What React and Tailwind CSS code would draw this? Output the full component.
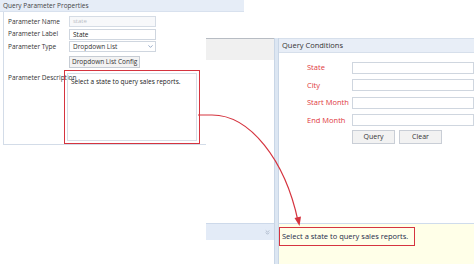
import { ChevronDown, ChevronsDown } from "lucide-react";

const font = { fontFamily: '"Open Sans", "Noto Sans", sans-serif' };

function LeftField({ label, children }) {
  return (
    <div className="flex items-center h-[12.5px]">
      <span className="w-[61px] text-[6.5px] text-[#333] whitespace-nowrap">{label}</span>
      {children}
    </div>
  );
}

function QueryRow({ label }) {
  return (
    <div className="flex items-center h-[17.5px]">
      <span className="w-[73px] pl-[28px] text-[7.5px] text-[#e0393e] whitespace-nowrap">{label}</span>
      <div className="flex-1 h-[12px] border border-[#cfd6df] bg-white" />
    </div>
  );
}

export default function App() {
  return (
    <div className="relative w-[474px] h-[264px] bg-white overflow-hidden" style={font}>
      {/* Parameter properties window */}
      <div className="absolute left-0 top-0 w-[244px] h-[142px] flex flex-col">
        <div className="h-[12px] bg-[#e6edf7] border-b border-[#d8e1ee] text-[6.5px] text-[#444] pl-[3px] leading-[12px]">
          Query Parameter Properties
        </div>
        <div className="flex-1 ml-[3px] border-l border-b border-[#d3dce8] pl-[4px] pt-[3.5px]">
          <LeftField label="Parameter Name">
            <div className="w-[87px] h-[11px] border border-[#d5dce5] bg-[#f7f8fa] text-[6px] text-[#b8bcc4] pl-[3px] leading-[9px]">state</div>
          </LeftField>
          <LeftField label="Parameter Label">
            <div className="w-[87px] h-[11px] border border-[#cfd6df] text-[6.5px] text-[#222] pl-[3px] leading-[9px]">State</div>
          </LeftField>
          <LeftField label="Parameter Type">
            <div className="w-[87px] h-[11px] border border-[#cfd6df] text-[6.5px] text-[#333] pl-[3px] leading-[9px] flex justify-between items-center pr-[1px]">
              Dropdown List
              <ChevronDown className="w-[7px] h-[7px] text-[#6f8bb5]" strokeWidth={2.5} />
            </div>
          </LeftField>
          <div className="flex mt-[3px]">
            <div className="ml-[61px] h-[12px] px-[2px] border border-[#c6ccd4] bg-[#f3f3f3] text-[6.5px] text-[#333] leading-[10px] whitespace-nowrap">
              Dropdown List Config
            </div>
          </div>
          <div className="flex mt-[2px]">
            <span className="w-[61px] text-[6.5px] text-[#333] whitespace-nowrap pt-[3px] overflow-visible">Parameter Description</span>
            <div className="relative -ml-[5px] w-[136px] h-[74px] border-[1.5px] border-[#d5343f] p-[2px]">
              <div className="h-full border border-[#d8dee7] text-[6.5px] text-[#222] px-[3px] pt-[3px]">
                Select a state to query sales reports.
              </div>
            </div>
          </div>
        </div>
      </div>

      {/* Report viewer window */}
      <div className="absolute left-[206px] top-[38px] w-[268px] h-[226px] flex bg-white">
        <div className="w-[68px] flex flex-col">
          <div className="h-[22px] bg-[#f0f0f0] border-t border-[#b7bcc3]" />
          <div className="flex-1" />
          <div className="h-[17px] bg-[#e3ebf7] border-t border-[#cdd9ea] flex items-center justify-end pr-[3px]">
            <ChevronsDown className="w-[7px] h-[7px] text-[#9aa8bd]" strokeWidth={2.5} />
          </div>
          <div className="h-[24px]" />
        </div>
        <div className="w-[5px] bg-[#dce6f2] border-x border-[#c9d6e6]" />
        <div className="flex-1 flex flex-col">
          <div className="h-[15px] bg-[#e8eef7] border-t border-[#a9b1bc] border-b border-[#d6dfeb] text-[7.5px] text-[#333] pl-[3px] leading-[13px]">
            Query Conditions
          </div>
          <div className="pt-[6px]">
            <QueryRow label="State" />
            <QueryRow label="City" />
            <QueryRow label="Start Month" />
            <QueryRow label="End Month" />
            <div className="flex gap-[4px] ml-[73px] mt-[1px]">
              <div className="w-[43px] h-[14px] border border-[#c9ced6] bg-[#f2f2f2] text-[7px] text-[#333] text-center leading-[12px]">Query</div>
              <div className="w-[43px] h-[14px] border border-[#c9ced6] bg-[#f2f2f2] text-[7px] text-[#333] text-center leading-[12px]">Clear</div>
            </div>
          </div>
          <div className="flex-1" />
          <div className="h-[41px] bg-[#ffffe8] border-t border-[#cfdcec] pt-[3px]">
            <div className="w-[136px] h-[19px] border-[1.5px] border-[#d5343f] text-[7.5px] text-[#1e2a4a] pl-[2px] leading-[16px] whitespace-nowrap">
              Select a state to query sales reports.
            </div>
          </div>
        </div>
      </div>

      {/* Connector arrow */}
      <svg className="absolute left-0 top-0 pointer-events-none" width="474" height="264" viewBox="0 0 474 264">
        <path d="M198 115 H212 C250 115 285 160 298 221" fill="none" stroke="#d5343f" strokeWidth="1.2" />
        <path d="M294.5 218 L299.5 226 L301 216.5 Z" fill="#d5343f" />
      </svg>
    </div>
  );
}
